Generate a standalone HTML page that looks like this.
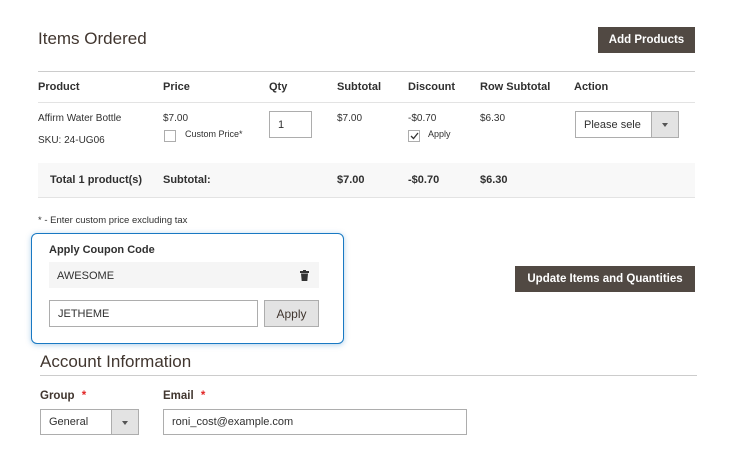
<!DOCTYPE html>
<html><head><meta charset="utf-8"><style>
*{margin:0;padding:0;box-sizing:border-box}
body{width:733px;height:459px;background:#fff;font-family:"Liberation Sans",sans-serif;color:#303030;position:relative;overflow:hidden}
.a{position:absolute;white-space:nowrap}
.h{font-size:11px;font-weight:bold;color:#303030}
.t{font-size:10px;color:#303030}
.b{font-size:11px;font-weight:bold}
.inp{position:absolute;border:1px solid #adadad;background:#fff;font-size:11px;padding-left:8px;display:flex;align-items:center}
.cb{position:absolute;width:12px;height:12px;border:1px solid #adadad;background:#fff}
.arr{position:absolute;top:0;bottom:0;right:0;width:27px;background:#e3e3e3;border-left:1px solid #adadad}
.arr:after{content:"";position:absolute;left:10px;top:11px;border-left:3.5px solid transparent;border-right:3.5px solid transparent;border-top:4px solid #555}
</style></head><body>
<div class="a" style="left:38px;top:29px;font-size:17px;color:#41362f">Items Ordered</div>
<div class="a" style="left:598px;top:27px;width:97px;height:26px;background:#514943;color:#fff;font-size:11.5px;font-weight:bold;display:flex;align-items:center;justify-content:center">Add Products</div>
<div class="a" style="left:38px;top:71px;width:657px;height:1px;background:#ccc"></div>
<div class="a h" style="left:38px;top:81px">Product</div>
<div class="a h" style="left:163px;top:81px">Price</div>
<div class="a h" style="left:269px;top:81px">Qty</div>
<div class="a h" style="left:337px;top:81px">Subtotal</div>
<div class="a h" style="left:408px;top:81px">Discount</div>
<div class="a h" style="left:480px;top:81px">Row Subtotal</div>
<div class="a h" style="left:574px;top:81px">Action</div>
<div class="a" style="left:38px;top:102px;width:657px;height:1px;background:#e3e3e3"></div>
<div class="a t" style="left:38px;top:113px">Affirm Water Bottle</div>
<div class="a t" style="left:38px;top:135px">SKU: 24-UG06</div>
<div class="a t" style="left:163px;top:113px">$7.00</div>
<div class="cb" style="left:164px;top:130px"></div>
<div class="a" style="left:185px;top:129px;font-size:9px">Custom Price*</div>
<div class="inp" style="left:269px;top:111px;width:43px;height:27px">1</div>
<div class="a t" style="left:337px;top:113px">$7.00</div>
<div class="a t" style="left:408px;top:113px">-$0.70</div>
<div class="cb" style="left:408px;top:130px"><svg width="10" height="10" style="position:absolute;left:0;top:0"><path d="M2 5 L4.5 7.5 L9 2" stroke="#333" stroke-width="1.3" fill="none"/></svg></div>
<div class="a" style="left:428px;top:129px;font-size:9px">Apply</div>
<div class="a t" style="left:480px;top:113px">$6.30</div>
<div class="inp" style="left:575px;top:111px;width:104px;height:27px">Please sele<div class="arr"></div></div>
<div class="a" style="left:38px;top:163px;width:657px;height:35px;background:#f8f8f8;border-bottom:1px solid #e3e3e3"></div>
<div class="a b" style="left:50px;top:174px">Total 1 product(s)</div>
<div class="a b" style="left:163px;top:174px">Subtotal:</div>
<div class="a b" style="left:337px;top:174px">$7.00</div>
<div class="a b" style="left:408px;top:174px">-$0.70</div>
<div class="a b" style="left:480px;top:174px">$6.30</div>
<div class="a" style="left:38px;top:215px;font-size:9.5px">* - Enter custom price excluding tax</div>
<div class="a" style="left:31px;top:233px;width:313px;height:111px;border:1px solid #1979c3;border-radius:6px;box-shadow:0 1px 6px rgba(25,121,195,.35);background:#fff"></div>
<div class="a b" style="left:49px;top:244px">Apply Coupon Code</div>
<div class="a" style="left:49px;top:262px;width:270px;height:26px;background:#f5f5f5"></div>
<div class="a" style="left:57px;top:270px;font-size:11px">AWESOME</div>
<svg class="a" style="left:300px;top:270px" width="9" height="11"><rect x="0" y="1" width="9" height="2" fill="#333"/><rect x="3" y="0" width="3" height="2" fill="#333"/><path d="M1 3.5 H8 L7.3 11 H1.7Z" fill="#333"/></svg>
<div class="inp" style="left:49px;top:300px;width:209px;height:27px">JETHEME</div>
<div class="a" style="left:264px;top:300px;width:55px;height:27px;background:#e3e3e3;border:1px solid #adadad;font-size:12px;display:flex;align-items:center;justify-content:center;color:#41362f">Apply</div>
<div class="a" style="left:515px;top:266px;width:180px;height:26px;background:#514943;color:#fff;font-size:11.5px;font-weight:bold;display:flex;align-items:center;justify-content:center">Update Items and Quantities</div>
<div class="a" style="left:40px;top:352px;font-size:17px;color:#41362f">Account Information</div>
<div class="a" style="left:40px;top:375px;width:657px;height:1px;background:#ccc"></div>
<div class="a" style="left:40px;top:390px;font-size:11.5px;font-weight:bold;color:#41362f">Group <span style="color:#e22626;margin-left:4px">*</span></div>
<div class="a" style="left:163px;top:390px;font-size:11.5px;font-weight:bold;color:#41362f">Email <span style="color:#e22626;margin-left:4px">*</span></div>
<div class="inp" style="left:40px;top:409px;width:99px;height:26px">General<div class="arr"></div></div>
<div class="inp" style="left:163px;top:409px;width:304px;height:26px">roni_cost@example.com</div>
</body></html>
